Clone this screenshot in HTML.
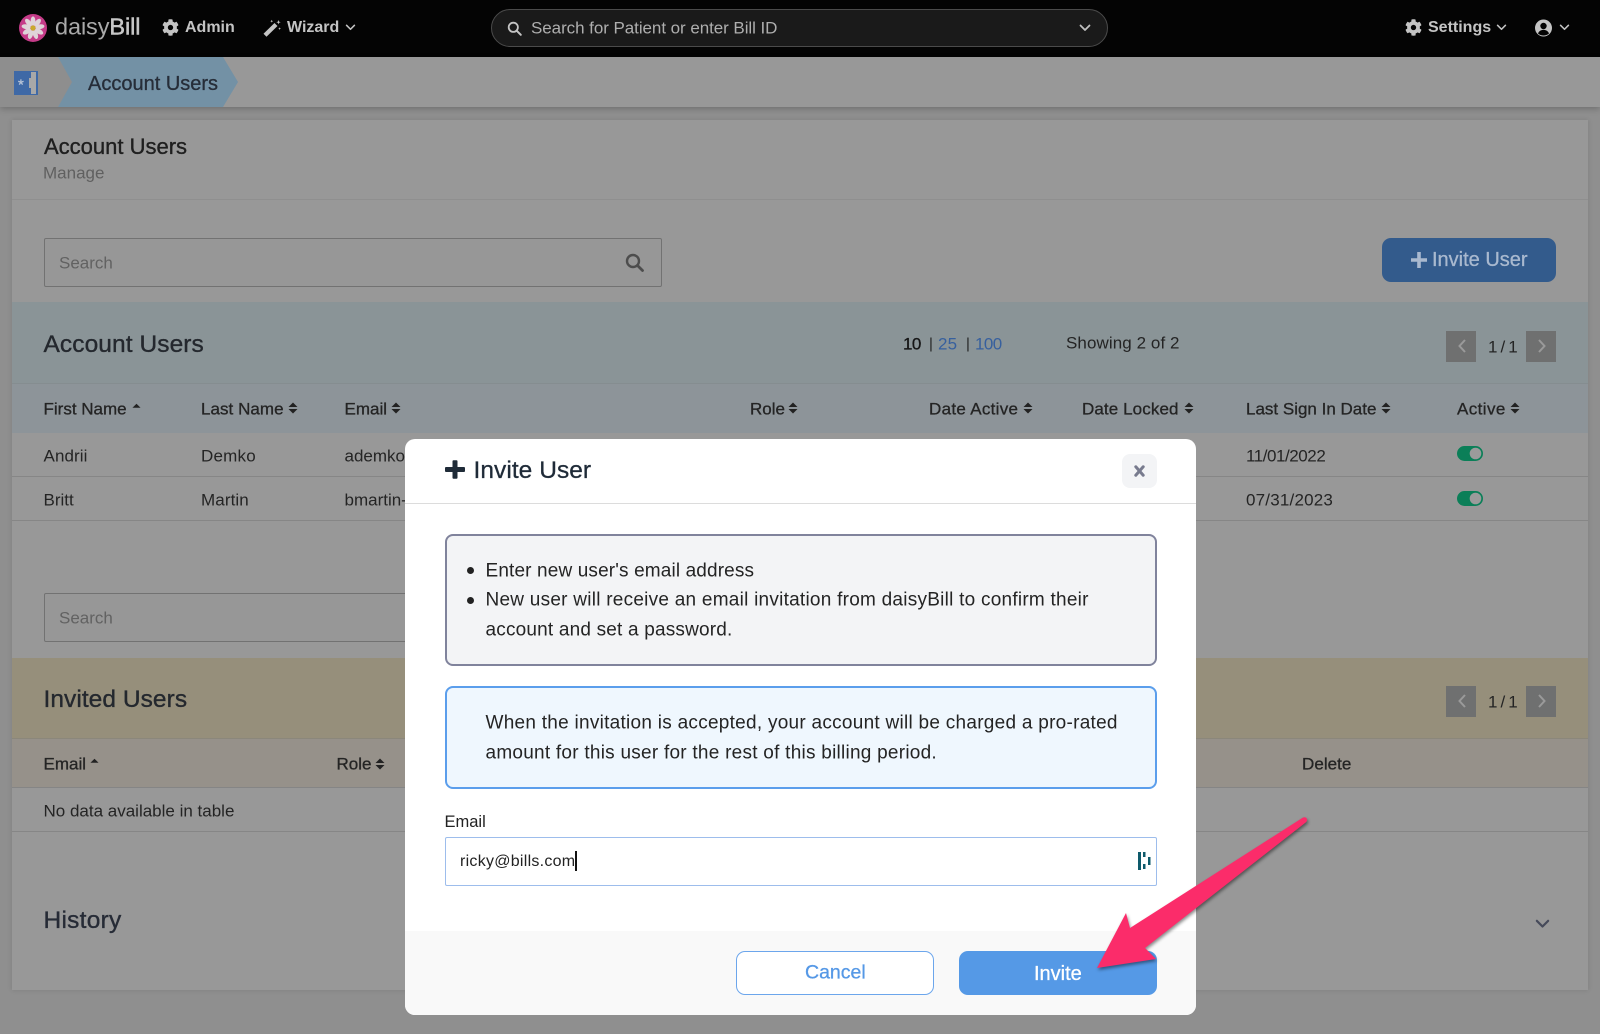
<!DOCTYPE html>
<html lang="en"><head><meta charset="utf-8"><title>Account Users</title>
<style>
html,body{margin:0;padding:0;width:1600px;height:1034px;overflow:hidden;background:#8f8f8f}
body{font-family:"Liberation Sans",sans-serif;color:#222}
#r{position:relative;width:1600px;height:1034px;overflow:hidden;filter:blur(.35px)}
.b{position:absolute}
.t{position:absolute;white-space:nowrap;line-height:1;transform:translateY(-50%);font-size:17px;color:#242424}
.m{-webkit-text-stroke:.3px currentColor}
.h{font-size:24.5px;color:#24282e;-webkit-text-stroke:.35px currentColor}
.n{color:#c4c4c4;font-weight:bold;font-size:16px}
svg{position:absolute;overflow:visible}
.pg{position:absolute;width:30px;height:31px;background:#6f7070}
.inp{position:absolute;box-sizing:border-box;border:1px solid #727272;border-radius:2px;background:#979797;height:49px}
.l{position:absolute;height:1px;background:#868686}
.lg{color:#151515}
</style></head><body><div id="r">
<svg width="0" height="0" style="position:absolute"><defs>
<symbol id="gear" viewBox="0 0 512 512"><path fill="currentColor" d="M487.4 315.7l-42.6-24.6c4.3-23.2 4.3-47 0-70.2l42.6-24.6c4.9-2.8 7.1-8.6 5.5-14-11.1-35.6-30-67.8-54.7-94.6-3.8-4.1-10-5.1-14.8-2.3L380.8 110c-17.9-15.4-38.5-27.3-60.8-35.1V25.8c0-5.6-3.9-10.5-9.4-11.7-36.7-8.2-74.3-7.8-109.2 0-5.5 1.2-9.4 6.1-9.4 11.7V75c-22.2 7.9-42.8 19.8-60.8 35.1L88.7 85.5c-4.9-2.8-11-1.9-14.8 2.3-24.7 26.7-43.6 58.9-54.7 94.6-1.7 5.4.6 11.2 5.5 14L67.3 221c-4.3 23.2-4.3 47 0 70.2l-42.6 24.6c-4.9 2.8-7.1 8.6-5.5 14 11.1 35.6 30 67.8 54.7 94.6 3.8 4.1 10 5.1 14.8 2.3l42.6-24.6c17.9 15.4 38.5 27.3 60.8 35.1v49.2c0 5.6 3.9 10.5 9.4 11.7 36.7 8.2 74.3 7.8 109.2 0 5.5-1.2 9.4-6.1 9.4-11.7v-49.2c22.2-7.9 42.8-19.8 60.8-35.1l42.6 24.6c4.9 2.8 11 1.9 14.8-2.3 24.7-26.7 43.6-58.9 54.7-94.6 1.5-5.5-.7-11.3-5.6-14.1zM256 336c-44.1 0-80-35.9-80-80s35.9-80 80-80 80 35.9 80 80-35.9 80-80 80z"/></symbol>
<symbol id="sort" viewBox="0 0 10 12"><path fill="currentColor" d="M5 0.5L9.5 5H.5zM5 11.5L.5 7h9z"/></symbol>
<symbol id="chev" viewBox="0 0 12 8"><path fill="none" stroke="currentColor" stroke-width="1.8" stroke-linecap="round" stroke-linejoin="round" d="M1.5 1.5L6 6l4.5-4.5"/></symbol>
<symbol id="up" viewBox="0 0 10 6"><path fill="currentColor" d="M5 .5L9.5 5H.5z"/></symbol>
</defs></svg>

<!-- navbar -->
<div class="b" style="left:0;top:0;width:1600px;height:57px;background:#040404"></div>
<svg style="left:19px;top:14px" width="28" height="28" viewBox="0 0 28 28">
<circle cx="14" cy="14" r="14" fill="#c53b88"/>
<g fill="#dfd3d8"><ellipse cx="14" cy="7" rx="2.4" ry="4.6"/><ellipse cx="14" cy="7" rx="2.4" ry="4.6" transform="rotate(40 14 14)"/><ellipse cx="14" cy="7" rx="2.4" ry="4.6" transform="rotate(80 14 14)"/><ellipse cx="14" cy="7" rx="2.4" ry="4.6" transform="rotate(120 14 14)"/><ellipse cx="14" cy="7" rx="2.4" ry="4.6" transform="rotate(160 14 14)"/><ellipse cx="14" cy="7" rx="2.4" ry="4.6" transform="rotate(200 14 14)"/><ellipse cx="14" cy="7" rx="2.4" ry="4.6" transform="rotate(240 14 14)"/><ellipse cx="14" cy="7" rx="2.4" ry="4.6" transform="rotate(280 14 14)"/><ellipse cx="14" cy="7" rx="2.4" ry="4.6" transform="rotate(320 14 14)"/></g>
<circle cx="14" cy="14" r="2.6" fill="#c9a92c"/></svg>
<div class="t" style="left:55px;top:27px;font-size:23.5px;color:#a9a9a9;letter-spacing:-.1px">daisy<span style="color:#c6c6c6;-webkit-text-stroke:.5px #c6c6c6">Bill</span></div>
<svg style="left:162px;top:19px;color:#c4c4c4" width="17" height="17"><use href="#gear"/></svg>
<div class="t n" style="left:185px;top:28px">Admin</div>
<svg style="left:263px;top:19px" width="19" height="18" viewBox="0 0 19 18"><path fill="#c4c4c4" d="M.5 14.700L11.500 4l3 3L3.500 17.800zM15.500 1l.6 1.600 1.600.6-1.600.6-.6 1.600-.6-1.600-1.600-.6 1.600-.6zM8.700.8l.4 1 1 .4-1 .4-.4 1-.4-1-1-.4 1-.4zM16.600 8.200l.4 1 1 .4-1 .4-.4 1-.4-1-1-.4 1-.4z"/></svg>
<div class="t n" style="left:287px;top:28px">Wizard</div>
<svg style="left:345px;top:24px;color:#c4c4c4" width="11" height="7"><use href="#chev"/></svg>
<div class="b" style="left:491px;top:9px;width:617px;height:38px;box-sizing:border-box;border:1.5px solid #4b4b4b;border-radius:19px;background:#1a1a1a"></div>
<svg style="left:507px;top:21px" width="15" height="15" viewBox="0 0 15 15"><circle cx="6.3" cy="6.3" r="4.6" fill="none" stroke="#c4c4c4" stroke-width="1.8"/><path d="M9.8 9.8l4 4" stroke="#c4c4c4" stroke-width="2" stroke-linecap="round"/></svg>
<div class="t" style="left:531px;top:28px;color:#aeaeae;letter-spacing:-.06px">Search for Patient or enter Bill ID</div>
<svg style="left:1079px;top:24px;color:#c0c0c0" width="12" height="8"><use href="#chev"/></svg>
<svg style="left:1405px;top:19px;color:#c4c4c4" width="17" height="17"><use href="#gear"/></svg>
<div class="t n" style="left:1428px;top:28px">Settings</div>
<svg style="left:1496px;top:24px;color:#c4c4c4" width="11" height="7"><use href="#chev"/></svg>
<svg style="left:1535px;top:19px" width="17" height="18" viewBox="0 0 17 18"><circle cx="8.5" cy="9" r="8.5" fill="#c4c4c4"/><circle cx="8.5" cy="7" r="3.2" fill="#040404"/><path d="M3 14.5c1-2.6 3-3.6 5.5-3.6s4.5 1 5.5 3.6c-1.5 1.3-3.4 2-5.5 2s-4-.7-5.500-2z" fill="#040404"/></svg>
<svg style="left:1559px;top:24px;color:#c4c4c4" width="11" height="7"><use href="#chev"/></svg>

<!-- breadcrumb -->
<div class="b" style="left:0;top:57px;width:1600px;height:50px;background:#989898;box-shadow:0 2px 6px rgba(0,0,0,.22)"></div>
<svg style="left:0;top:57px" width="240" height="50" viewBox="0 0 240 50">
<path d="M0 0H58L73 25 58 50H0z" fill="#8e8e8e"/><path d="M58 0H223L238 25 223 50H58L72 25z" fill="#7391a5"/></svg>
<div class="b" style="left:14px;top:71px;width:24px;height:24px;background:#3f69a6"></div>
<div class="b" style="left:31px;top:72px;width:5px;height:22px;background:#a8a8a8"></div>
<div class="b" style="left:29px;top:78px;width:3px;height:10px;background:#a8a8a8"></div>
<div class="t m" style="left:18px;top:85px;font-size:15px;color:#b9c5d8">*</div>
<div class="t m" style="left:88px;top:84px;font-size:20px;color:#262d38">Account Users</div>

<!-- panel -->
<div class="b" style="left:12px;top:120px;width:1576px;height:870px;background:#989898;box-shadow:0 0 5px rgba(0,0,0,.12)"></div>
<div class="t h" style="left:44px;top:147px;font-size:22px;color:#1f1f1f">Account Users</div>
<div class="t" style="left:43px;top:173px;color:#606060">Manage</div>
<div class="l" style="left:12px;top:199px;width:1576px;background:#8f8f8f"></div>
<div class="inp" style="left:44px;top:238px;width:618px"></div>
<div class="t" style="left:59px;top:263px;color:#626262">Search</div>
<svg style="left:625px;top:253px" width="19" height="19" viewBox="0 0 19 19"><circle cx="8" cy="8" r="6" fill="none" stroke="#4d4d4d" stroke-width="2.4"/><path d="M12.5 12.5l5 5" stroke="#4d4d4d" stroke-width="2.8" stroke-linecap="round"/></svg>
<div class="b" style="left:1382px;top:238px;width:174px;height:44px;border-radius:9px;background:#335b8c"></div>
<svg style="left:1411px;top:252px" width="16" height="16" viewBox="0 0 16 16"><path fill="#a9b9cf" d="M6.2 0h3.6v6.2H16v3.6H9.8V16H6.2V9.8H0V6.2h6.2z"/></svg>
<div class="t m" style="left:1432px;top:260px;font-size:20px;color:#a9b9cf">Invite User</div>

<!-- Account users band -->
<div class="b" style="left:12px;top:302px;width:1576px;height:81px;background:#8a9497"></div>
<div class="b" style="left:12px;top:383px;width:1576px;height:50px;background:#8d9499;border-top:1px solid #858d90;box-sizing:border-box"></div>
<div class="t h" style="left:43.5px;top:345px;letter-spacing:.08px">Account Users</div>
<div class="t m lg" style="left:903px;top:344px;letter-spacing:-.6px">10</div>
<div class="t" style="left:929px;top:344px;font-size:15px">|</div>
<div class="t" style="left:938px;top:344px;color:#37609e;letter-spacing:.2px">25</div>
<div class="t" style="left:966px;top:344px;font-size:15px">|</div>
<div class="t" style="left:975px;top:344px;color:#37609e;letter-spacing:-.6px">100</div>
<div class="t" style="left:1066px;top:343px;letter-spacing:.08px">Showing 2 of 2</div>
<div class="pg" style="left:1446px;top:331px"></div>
<svg style="left:1458px;top:339px" width="8" height="14" viewBox="0 0 8 14"><path d="M7 1L1.5 7 7 13" fill="none" stroke="#9a9a9a" stroke-width="2"/></svg>
<div class="t" style="left:1488px;top:347px;letter-spacing:-.85px">1 / 1</div>
<div class="pg" style="left:1526px;top:331px"></div>
<svg style="left:1538px;top:339px" width="8" height="14" viewBox="0 0 8 14"><path d="M1 1l5.500 6L1 13" fill="none" stroke="#9a9a9a" stroke-width="2"/></svg>

<div class="t m" style="left:43.5px;top:409px">First Name</div><svg style="left:132px;top:403px;color:#222" width="9" height="6"><use href="#up"/></svg>
<div class="t m" style="left:201px;top:409px;letter-spacing:.05px">Last Name</div><svg style="left:288px;top:402px;color:#222" width="10" height="12"><use href="#sort"/></svg>
<div class="t m" style="left:344.5px;top:409px">Email</div><svg style="left:391px;top:402px;color:#222" width="10" height="12"><use href="#sort"/></svg>
<div class="t m" style="left:750px;top:409px">Role</div><svg style="left:788px;top:402px;color:#222" width="10" height="12"><use href="#sort"/></svg>
<div class="t m" style="left:929px;top:409px;letter-spacing:.3px">Date Active</div><svg style="left:1023px;top:402px;color:#222" width="10" height="12"><use href="#sort"/></svg>
<div class="t m" style="left:1082px;top:409px;letter-spacing:.1px">Date Locked</div><svg style="left:1184px;top:402px;color:#222" width="10" height="12"><use href="#sort"/></svg>
<div class="t m" style="left:1246px;top:409px">Last Sign In Date</div><svg style="left:1381px;top:402px;color:#222" width="10" height="12"><use href="#sort"/></svg>
<div class="t m" style="left:1457px;top:409px;letter-spacing:.4px">Active</div><svg style="left:1510px;top:402px;color:#222" width="10" height="12"><use href="#sort"/></svg>

<div class="l" style="left:12px;top:476px;width:1576px"></div>
<div class="l" style="left:12px;top:520px;width:1576px"></div>
<div class="t" style="left:43.5px;top:456px;letter-spacing:.1px">Andrii</div><div class="t" style="left:201px;top:456px;letter-spacing:.2px">Demko</div><div class="t" style="left:344.5px;top:456px">ademko</div>
<div class="t" style="left:1246px;top:456px;letter-spacing:-.45px">11/01/2022</div>
<div class="t" style="left:43.5px;top:500px">Britt</div><div class="t" style="left:201px;top:500px;letter-spacing:.1px">Martin</div><div class="t" style="left:344.5px;top:500px">bmartin-</div>
<div class="t" style="left:1246px;top:500px;letter-spacing:.2px">07/31/2023</div>
<svg style="left:1457px;top:446px" width="26" height="15"><rect width="26" height="15" rx="7.5" fill="#0b7f58"/><circle cx="18.500" cy="7.500" r="5.800" fill="#9b9b9b"/></svg>
<svg style="left:1457px;top:491px" width="26" height="15"><rect width="26" height="15" rx="7.500" fill="#0b7f58"/><circle cx="18.500" cy="7.500" r="5.800" fill="#9b9b9b"/></svg>

<!-- invited -->
<div class="inp" style="left:44px;top:593px;width:500px"></div>
<div class="t" style="left:59px;top:618px;color:#626262">Search</div>
<div class="b" style="left:12px;top:658px;width:1576px;height:80px;background:#968f7b"></div>
<div class="b" style="left:12px;top:738px;width:1576px;height:50px;background:#96918a;border-top:1px solid #8b877b;border-bottom:1px solid #858585;box-sizing:border-box"></div>
<div class="t h" style="left:43.5px;top:700px;letter-spacing:.05px">Invited Users</div>
<div class="pg" style="left:1446px;top:686px"></div>
<svg style="left:1458px;top:694px" width="8" height="14" viewBox="0 0 8 14"><path d="M7 1L1.500 7 7 13" fill="none" stroke="#9a9a9a" stroke-width="2"/></svg>
<div class="t" style="left:1488px;top:702px;letter-spacing:-.85px">1 / 1</div>
<div class="pg" style="left:1526px;top:686px"></div>
<svg style="left:1538px;top:694px" width="8" height="14" viewBox="0 0 8 14"><path d="M1 1l5.500 6L1 13" fill="none" stroke="#9a9a9a" stroke-width="2"/></svg>
<div class="t m" style="left:43.5px;top:764px">Email</div><svg style="left:90px;top:758px;color:#222" width="9" height="6"><use href="#up"/></svg>
<div class="t m" style="left:336.5px;top:764px">Role</div><svg style="left:375px;top:758px;color:#222" width="10" height="12"><use href="#sort"/></svg>
<div class="t m" style="left:1302px;top:764px;letter-spacing:.05px">Delete</div>
<div class="t" style="left:43.5px;top:811px">No data available in table</div>
<div class="l" style="left:12px;top:831px;width:1576px"></div>
<div class="t h" style="left:43.5px;top:921px;color:#262b36;letter-spacing:.25px">History</div>
<svg style="left:1534px;top:919px;color:#464a5a" width="17" height="10"><use href="#chev"/></svg>

<!-- modal -->
<div class="b" style="left:404.5px;top:439px;width:791.5px;height:576px;background:#fff;border-radius:10px;overflow:hidden">
<div class="b" style="left:0;top:492px;width:792px;height:84px;background:#f9f9f9"></div>
<div class="b" style="left:0;top:64px;width:792px;height:1px;background:#dcdcdc"></div>
</div>
<svg style="left:445px;top:460px" width="20" height="19" viewBox="0 0 20 19"><path fill="#1f2b38" d="M7.500 1.200a1 1 0 0 1 1-1h3a1 1 0 0 1 1 1V7H19a1 1 0 0 1 1 1v3a1 1 0 0 1-1 1h-6.500v5.800a1 1 0 0 1-1 1h-3a1 1 0 0 1-1-1V12H1a1 1 0 0 1-1-1V8a1 1 0 0 1 1-1h6.500z"/></svg>
<div class="t m" style="left:473.5px;top:471px;font-size:24.5px;color:#1f2b38;letter-spacing:.05px">Invite User</div>
<div class="b" style="left:1122px;top:454px;width:35px;height:34px;background:#f3f4f6;border-radius:8px"></div>
<svg style="left:1134px;top:465px" width="11" height="12" viewBox="0 0 11 12"><path d="M1.800 1.800l7.400 8.400M9.200 1.800l-7.400 8.400" stroke="#787b8e" stroke-width="3" stroke-linecap="round"/></svg>

<div class="b" style="left:445px;top:534px;width:712px;height:132px;box-sizing:border-box;background:#f3f4f6;border:2px solid #80839c;border-radius:8px"></div>
<div class="b" style="left:467px;top:567px;width:7px;height:7px;border-radius:50%;background:#222"></div>
<div class="b" style="left:467px;top:597px;width:7px;height:7px;border-radius:50%;background:#222"></div>
<div class="t" style="left:485.5px;top:571px;font-size:19px;letter-spacing:.14px">Enter new user's email address</div>
<div class="t" style="left:485.5px;top:600px;font-size:19px;letter-spacing:.25px">New user will receive an email invitation from daisyBill to confirm their</div>
<div class="t" style="left:485.5px;top:630px;font-size:19px;letter-spacing:.19px">account and set a password.</div>

<div class="b" style="left:445px;top:686px;width:712px;height:103px;box-sizing:border-box;background:#eff7fe;border:2px solid #5b9eec;border-radius:8px"></div>
<div class="t" style="left:485.5px;top:723px;font-size:19px;letter-spacing:.27px">When the invitation is accepted, your account will be charged a pro-rated</div>
<div class="t" style="left:485.5px;top:753px;font-size:19px;letter-spacing:.25px">amount for this user for the rest of this billing period.</div>

<div class="t" style="left:444.5px;top:822px;font-size:16.500px;color:#222">Email</div>
<div class="b" style="left:445px;top:837px;width:712px;height:49px;box-sizing:border-box;background:#fff;border:1px solid #9dbdec;border-radius:2px"></div>
<div class="t" style="left:460px;top:862px;font-size:16px;color:#222;letter-spacing:.27px">ricky@bills.com</div>
<div class="b" style="left:575px;top:851px;width:1.500px;height:20px;background:#111"></div>
<svg style="left:1138px;top:852px" width="13" height="19" viewBox="0 0 13 19"><g fill="#0e5a6b"><rect x="0" y="0" width="3" height="18"/><rect x="5" y="0" width="2.500" height="5"/><rect x="5" y="12" width="2.500" height="5"/><rect x="10" y="5" width="2.500" height="8"/></g></svg>

<div class="b" style="left:736px;top:951px;width:198px;height:44px;box-sizing:border-box;border:1.500px solid #6ca6ec;border-radius:9px;background:#fff"></div>
<div class="t m" style="left:805px;top:973px;font-size:19.500px;color:#5598e6">Cancel</div>
<div class="b" style="left:959px;top:951px;width:198px;height:44px;border-radius:9px;background:#5599e6"></div>
<div class="t m" style="left:1034px;top:974px;font-size:20px;color:#fff">Invite</div>

<!-- annotation arrow -->
<svg style="left:0;top:0;filter:drop-shadow(1.500px 2px 1.500px rgba(0,0,0,.45))" width="1600" height="1034" viewBox="0 0 1600 1034">
<path fill="#fb2c6a" d="M1303 817.500Q1306 816.500 1307 819Q1307.500 821.500 1305 823L1145 948 1156 959 1097 968 1126 913 1130 928z"/></svg>
</div></body></html>
